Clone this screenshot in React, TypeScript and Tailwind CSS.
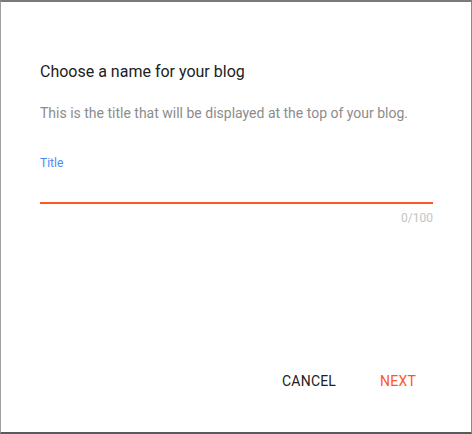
import React from "react";

export default function App() {
  return (
    <div
      className="w-[472px] h-[434px] bg-white border-t-2 border-b-2 border-l border-r border-t-[#7a7a7a] border-b-[#5a5a5a] border-l-[#a0a0a0] border-r-[#8a8a8a] flex flex-col"
      style={{ fontFamily: "Roboto, 'Liberation Sans', sans-serif" }}
    >
      <div className="pt-[58px] pl-[39px] pr-[38px] flex-1 flex flex-col">
        <h1 className="text-[16px] leading-[24px] text-[#212121] font-normal">
          Choose a name for your blog
        </h1>
        <p className="mt-[19px] text-[14px] leading-[20px] text-[#8c8c8c]">
          This is the title that will be displayed at the top of your blog.
        </p>
        <div className="mt-[33px]">
          <label className="block text-[12px] leading-[14px] text-[#4a8af4]">Title</label>
          <div className="h-[32px]" />
          <div className="h-[2px] bg-[#ff5722]" />
          <div className="mt-[7px] text-right text-[12px] leading-[14px] text-[#c4c4c4]">0/100</div>
        </div>
        <div className="flex-1" />
        <div className="flex justify-end items-center gap-[44px] pr-[17px] pb-[43px]">
          <button className="text-[14px] leading-[16px] font-normal text-[#212121] tracking-[0.2px]">CANCEL</button>
          <button className="text-[14px] leading-[16px] font-normal text-[#ff5722] tracking-[0.2px]">NEXT</button>
        </div>
      </div>
    </div>
  );
}
